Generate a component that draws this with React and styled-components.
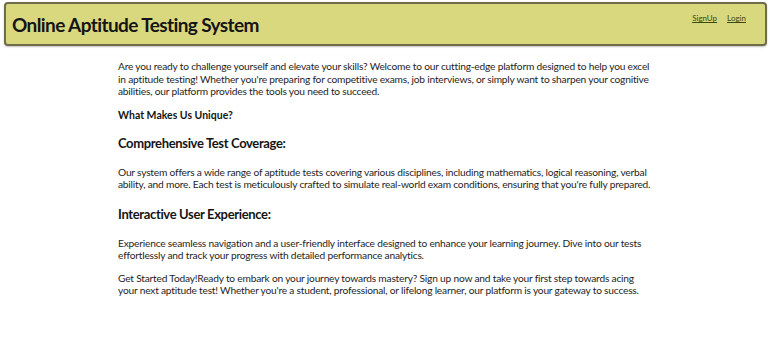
import React from "react";
import styled, { createGlobalStyle } from "styled-components";

const Global = createGlobalStyle`
  html, body { margin: 0; padding: 0; background: #ffffff; }
  body { font-family: "Lato", "Open Sans", sans-serif; color: #1a1a1a; }
`;

const Header = styled.header`
  margin: 2px 3px 0 4px;
  height: 40px;
  background: #d9d87f;
  border: 2px solid #6f6c48;
  border-radius: 4px;
  display: flex;
  align-items: center;
  justify-content: space-between;
  padding: 0 19px 0 6px;
  box-shadow: 0 1px 2px rgba(0,0,0,0.25);
`;

const Title = styled.h1`
  margin: 0;
  font-size: 19px;
  font-weight: 700;
  color: #151515;
  letter-spacing: -0.6px;
`;

const Nav = styled.nav`
  display: flex;
  gap: 10px;
  align-self: flex-start;
  margin-top: 9px;
`;

const NavLink = styled.a`
  font-size: 8px;
  color: #3b4a12;
  text-decoration: underline;
`;

const Main = styled.main`
  width: 534px;
  margin: 14px auto 0;
`;

const Para = styled.p`
  margin: 0 0 ${p => p.$gap || 10}px;
  font-size: 10.2px;
  letter-spacing: -0.2px;
  line-height: 12.5px;
  color: #1e1e1e;
`;

const Lead = styled.p`
  margin: 0 0 14px;
  font-size: 10.5px;
  font-weight: 700;
  color: #151515;
`;

const Heading = styled.h3`
  margin: 0 0 15px;
  font-size: 13px;
  font-weight: 700;
  letter-spacing: -0.35px;
  color: #151515;
`;

export default function App() {
  return (
    <>
      <Global />
      <Header>
        <Title>Online Aptitude Testing System</Title>
        <Nav>
          <NavLink href="#">SignUp</NavLink>
          <NavLink href="#">Login</NavLink>
        </Nav>
      </Header>
      <Main>
        <Para $gap={11}>
          Are you ready to challenge yourself and elevate your skills? Welcome to our cutting-edge platform designed to help you excel in aptitude testing! Whether you're preparing for competitive exams, job interviews, or simply want to sharpen your cognitive abilities, our platform provides the tools you need to succeed.
        </Para>
        <Lead>What Makes Us Unique?</Lead>
        <Heading>Comprehensive Test Coverage:</Heading>
        <Para $gap={15}>
          Our system offers a wide range of aptitude tests covering various disciplines, including mathematics, logical reasoning, verbal ability, and more. Each test is meticulously crafted to simulate real-world exam conditions, ensuring that you're fully prepared.
        </Para>
        <Heading>Interactive User Experience:</Heading>
        <Para $gap={10}>
          Experience seamless navigation and a user-friendly interface designed to enhance your learning journey. Dive into our tests effortlessly and track your progress with detailed performance analytics.
        </Para>
        <Para>
          Get Started Today!Ready to embark on your journey towards mastery? Sign up now and take your first step towards acing your next aptitude test! Whether you're a student, professional, or lifelong learner, our platform is your gateway to success.
        </Para>
      </Main>
    </>
  );
}
